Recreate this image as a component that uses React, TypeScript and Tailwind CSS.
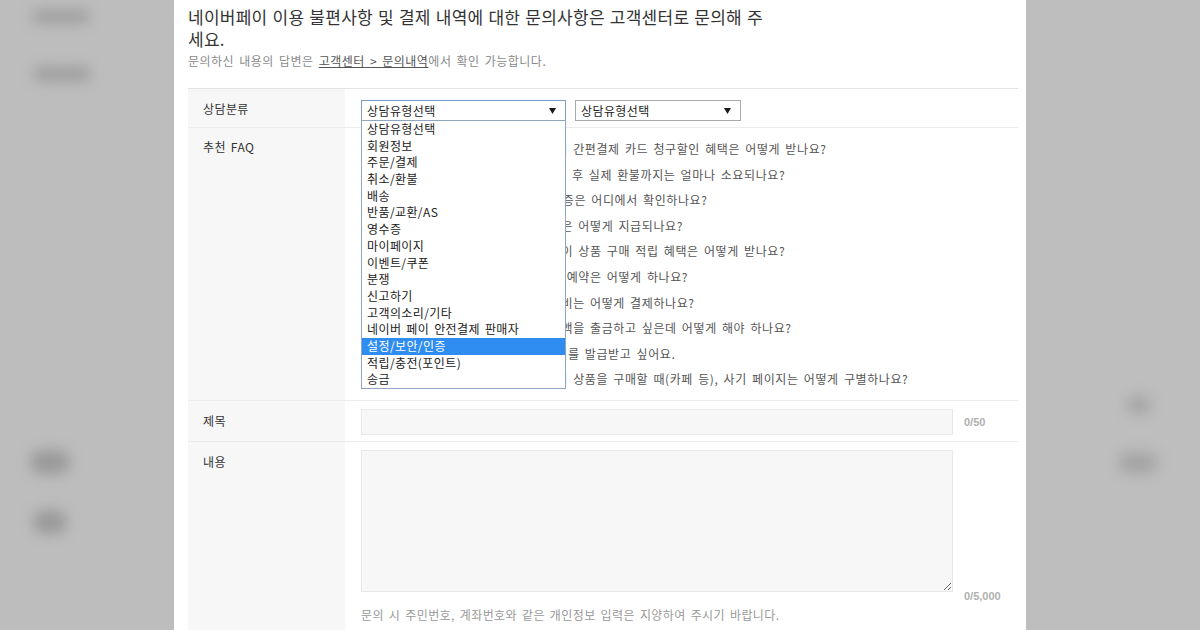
import React from "react";

const FONT = { fontFamily: '"Noto Sans CJK KR", "Noto Sans", sans-serif' };
const NUM = { fontFamily: '"Liberation Sans", Arial, sans-serif' };

const options = [
  "상담유형선택",
  "회원정보",
  "주문/결제",
  "취소/환불",
  "배송",
  "반품/교환/AS",
  "영수증",
  "마이페이지",
  "이벤트/쿠폰",
  "분쟁",
  "신고하기",
  "고객의소리/기타",
  "네이버 페이 안전결제 판매자",
  "설정/보안/인증",
  "적립/충전(포인트)",
  "송금",
];

const faqs = [
  "신용카드 결제 할인 이벤트 네이버페이 간편결제 카드 청구할인 혜택은 어떻게 받나요?",
  "주문 결제 취소 및 반품 신청이 완료된 후 실제 환불까지는 얼마나 소요되나요?",
  "네이버페이로 결제한 내역의 현금영수증은 어디에서 확인하나요?",
  "리뷰 작성 시 받는 네이버페이 적립금은 어떻게 지급되나요?",
  "네이버 멤버십 회원 가입 시 네이버페이 상품 구매 적립 혜택은 어떻게 받나요?",
  "네이버 예약 서비스에서 숙박 및 공연 예약은 어떻게 하나요?",
  "해외 직구 상품 관부가세와 국제 배송비는 어떻게 결제하나요?",
  "네이버페이 포인트 충전금 중 남은 잔액을 출금하고 싶은데 어떻게 해야 하나요?",
  "결제한 건의 현금 영수증과 세금계산서를 발급받고 싶어요.",
  "개인 간 중고거래 안전결제 서비스에서 상품을 구매할 때(카페 등), 사기 페이지는 어떻게 구별하나요?",
];

function Arrow() {
  return (
    <svg width="7" height="6" viewBox="0 0 7 6" className="shrink-0">
      <polygon points="0,0 7,0 3.5,6" fill="#1a1a1a" />
    </svg>
  );
}

export default function App() {
  return (
    <div className="flex w-[1200px] h-[630px] overflow-hidden bg-white" style={FONT}>
      {/* left blurred background */}
      <div className="w-[174px] shrink-0 bg-[#bdbdbd] flex flex-col">
        <div className="w-[58px] h-[13px] mt-[10px] ml-[32px] rounded-full bg-[#8f8f8f] blur-[7px] opacity-70" />
        <div className="w-[58px] h-[14px] mt-[44px] ml-[33px] rounded-full bg-[#8f8f8f] blur-[7px] opacity-70" />
        <div className="w-[40px] h-[24px] mt-[369px] ml-[30px] rounded-full bg-[#8a8a8a] blur-[7px] opacity-70" />
        <div className="w-[34px] h-[24px] mt-[36px] ml-[33px] rounded-full bg-[#8a8a8a] blur-[7px] opacity-70" />
      </div>

      {/* main panel */}
      <div className="w-[852px] shrink-0 bg-white pl-[14px] pr-[8px]">
        <h1 className="w-[586px] pt-[6px] text-[17px] leading-[22px] text-[#333] font-normal tracking-[0.25px] [word-spacing:1px]">
          네이버페이 이용 불편사항 및 결제 내역에 대한 문의사항은 고객센터로 문의해 주세요.
        </h1>
        <p className="mt-[2px] text-[12px] leading-[18px] text-[#8a8a8a] tracking-[0.5px] [word-spacing:1.9px]">
          문의하신 내용의 답변은{" "}
          <span className="underline text-[#555]">고객센터 &gt; 문의내역</span>에서 확인 가능합니다.
        </p>

        <div className="mt-[18px] border-t border-[#e3e3e3] text-[12px] tracking-[0.4px] [word-spacing:1.9px]">
          {/* row 1 */}
          <div className="flex h-[39px] border-b border-[#ececec]">
            <div className="w-[157px] shrink-0 bg-[#f7f7f7] pl-[15px] pt-[10px] leading-[20px] text-[#333]">
              상담분류
            </div>
            <div className="flex gap-[9px] pl-[16px] pt-[11px]">
              <div className="relative">
                <div className="flex items-center justify-between w-[205px] h-[21px] border border-[#7f9cc9] bg-white pl-[5px] pr-[9px] text-[#222] leading-[19px]">
                  <span>상담유형선택</span>
                  <Arrow />
                </div>
                <ul className="absolute left-0 top-[20px] z-10 w-[205px] border border-[#8ea5c4] bg-white text-[#222]">
                  {options.map((o) => (
                    <li
                      key={o}
                      className={`h-[16.7px] leading-[16.7px] pl-[5px] whitespace-nowrap ${
                        o === "설정/보안/인증" ? "bg-[#2f8cf0] text-white" : ""
                      }`}
                    >
                      {o}
                    </li>
                  ))}
                </ul>
              </div>
              <div className="flex items-center justify-between w-[166px] h-[21px] border border-[#a9a9a9] bg-white pl-[5px] pr-[9px] text-[#222] leading-[19px]">
                <span>상담유형선택</span>
                <Arrow />
              </div>
            </div>
          </div>

          {/* row 2 */}
          <div className="flex h-[273px] border-b border-[#ececec]">
            <div className="w-[157px] shrink-0 bg-[#f7f7f7] pl-[15px] pt-[9px] leading-[20px] text-[#333]">
              추천 FAQ
            </div>
            <ul className="pl-[16px] pt-[8px] text-[#555] tracking-[0.6px]">
              {faqs.map((f) => (
                <li key={f} className="leading-[25.6px] whitespace-nowrap">
                  {f}
                </li>
              ))}
            </ul>
          </div>

          {/* row 3 */}
          <div className="flex h-[41px] border-b border-[#ececec]">
            <div className="w-[157px] shrink-0 bg-[#f7f7f7] pl-[15px] pt-[10px] leading-[20px] text-[#333]">
              제목
            </div>
            <div className="flex items-start gap-[11px] pl-[16px] pt-[8px]">
              <div className="w-[592px] h-[26px] border border-[#e8e8e8] bg-[#f7f7f7]" />
              <span className="pt-[6px] text-[11px] leading-[14px] font-bold tracking-normal text-[#b0b0b0]" style={NUM}>
                0/50
              </span>
            </div>
          </div>

          {/* row 4 */}
          <div className="flex h-[200px]">
            <div className="w-[157px] shrink-0 bg-[#f7f7f7] pl-[15px] pt-[10px] leading-[20px] text-[#333]">
              내용
            </div>
            <div className="pl-[16px] pt-[8px]">
              <div className="flex items-start gap-[11px]">
                <textarea
                  readOnly
                  className="block w-[592px] h-[142px] border border-[#e8e8e8] bg-[#f7f7f7] outline-none"
                />
                <span className="pt-[139px] text-[11px] leading-[14px] font-bold tracking-normal text-[#b0b0b0]" style={NUM}>
                  0/5,000
                </span>
              </div>
              <p className="mt-[3px] leading-[18px] text-[#999]">
                문의 시 주민번호, 계좌번호와 같은 개인정보 입력은 지양하여 주시기 바랍니다.
              </p>
            </div>
          </div>
        </div>
      </div>

      {/* right blurred background */}
      <div className="w-[174px] shrink-0 bg-[#bebebe] flex flex-col">
        <div className="w-[26px] h-[18px] mt-[396px] ml-[100px] rounded-full bg-[#9a9a9a] blur-[7px] opacity-70" />
        <div className="w-[40px] h-[22px] mt-[38px] ml-[92px] rounded-full bg-[#9a9a9a] blur-[7px] opacity-70" />
      </div>
    </div>
  );
}
